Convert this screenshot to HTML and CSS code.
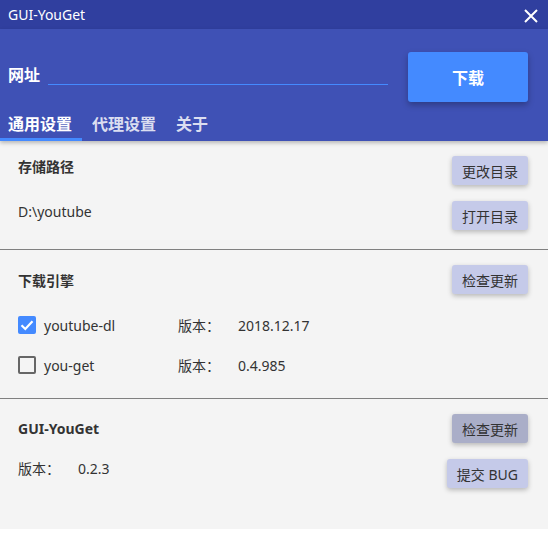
FILE: index.html
```html
<!DOCTYPE html>
<html lang="zh-CN">
<head>
<meta charset="utf-8">
<title>GUI-YouGet</title>
<link rel="stylesheet" href="styles.css">
</head>
<body>
<div class="app">
  <div class="titlebar">
    <span class="title">GUI-YouGet</span>
    <svg class="close" width="14" height="14" viewBox="0 0 14 14"><path d="M1 1 L13 13 M13 1 L1 13" stroke="#fff" stroke-width="2" fill="none"/></svg>
  </div>
  <div class="header">
    <div class="url-row">
      <span class="url-label">网址</span>
      <div class="url-input"></div>
      <div class="dl-btn">下载</div>
    </div>
    <div class="tabs">
      <div class="tab tab-active">通用设置</div>
      <div class="tab">代理设置</div>
      <div class="tab">关于</div>
    </div>
  </div>
  <div class="content">
    <div class="section">
      <div class="row">
        <span class="sec-title up">存储路径</span>
        <span class="btn">更改目录</span>
      </div>
      <div class="row">
        <span class="text up">D:\youtube</span>
        <span class="btn">打开目录</span>
      </div>
    </div>
    <div class="divider"></div>
    <div class="section sec2">
      <div class="row">
        <span class="sec-title">下载引擎</span>
        <span class="btn">检查更新</span>
      </div>
      <div class="check-row">
        <span class="cb cb-on"><svg width="18" height="18" viewBox="0 0 18 18"><path d="M3.5 9.2 L7.3 13 L14.5 5.2" stroke="#fff" stroke-width="2.2" fill="none"/></svg></span>
        <span class="engine">youtube-dl</span>
        <span class="ver-label">版本：</span>
        <span class="text">2018.12.17</span>
      </div>
      <div class="check-row">
        <span class="cb cb-off"></span>
        <span class="engine">you-get</span>
        <span class="ver-label">版本：</span>
        <span class="text">0.4.985</span>
      </div>
    </div>
    <div class="divider"></div>
    <div class="section sec3">
      <div class="row">
        <span class="sec-title">GUI-YouGet</span>
        <span class="btn btn-dark">检查更新</span>
      </div>
      <div class="row">
        <span class="ver-wrap up2"><span class="ver-label">版本：</span><span class="text">0.2.3</span></span>
        <span class="btn">提交 BUG</span>
      </div>
    </div>
  </div>
</div>
</body>
</html>
```
FILE: styles.css
```css
* { box-sizing: border-box; }
html, body { margin: 0; padding: 0; background: #ffffff; }
body {
  font-family: "Noto Sans", "Noto Sans CJK SC", sans-serif;
  width: 548px;
  height: 533px;
  overflow: hidden;
}
.app {
  width: 548px;
  height: 529px;
  display: flex;
  flex-direction: column;
  background: #f4f4f4;
}
.titlebar {
  height: 29px;
  background: #303f9f;
  display: flex;
  align-items: center;
  justify-content: space-between;
  padding: 0 10px 0 8px;
}
.title {
  color: #fff;
  font-size: 14px;
  line-height: 20px;
}
.close { margin-top: 3px; }
.header {
  background: #3f51b5;
  padding-top: 23px;
  box-shadow: 0 2px 4px rgba(0,0,0,0.25);
  position: relative;
  z-index: 1;
}
.url-row {
  height: 50px;
  display: flex;
  align-items: center;
  padding: 0 20px 0 8px;
}
.url-label {
  color: #fff;
  font-weight: bold;
  font-size: 16px;
  line-height: 20px;
  margin-top: -4px;
}
.url-input {
  width: 340px;
  height: 16px;
  margin-left: 8px;
  border-bottom: 1px solid #448aff;
}
.dl-btn {
  margin-left: 20px;
  width: 120px;
  height: 50px;
  background: #448aff;
  border-radius: 3px;
  color: #fff;
  font-weight: bold;
  font-size: 16px;
  display: flex;
  align-items: center;
  justify-content: center;
  box-shadow: 0 3px 6px rgba(0,0,0,0.28);
}
.tabs {
  display: flex;
  margin-top: 6px;
}
.tab {
  height: 33px;
  padding: 3px 10px 0 10px;
  line-height: 27px;
  font-size: 16px;
  font-weight: bold;
  color: rgba(255,255,255,0.82);
  border-bottom: 3px solid transparent;
}
.tab-active {
  padding-left: 8px;
  color: #fff;
  border-bottom-color: #448aff;
}
.content {
  flex: 1;
  display: flex;
  flex-direction: column;
}
.section {
  padding: 15px 20px 19px 18px;
  display: flex;
  flex-direction: column;
  gap: 16px;
}
.sec2 { padding-bottom: 13px; gap: 0; }
.sec3 { padding-bottom: 0; }
.row {
  height: 29px;
  display: flex;
  align-items: center;
  justify-content: space-between;
}
.up { margin-bottom: 9px; }
.up2 { margin-bottom: 11px; }
.sec-title {
  font-size: 14px;
  font-weight: bold;
  color: #333;
}
.text {
  font-size: 14px;
  color: #333;
}
.btn {
  height: 29px;
  padding: 0 10px;
  background: #c5cae9;
  border-radius: 3px;
  font-size: 14px;
  color: #333;
  display: flex;
  align-items: center;
  box-shadow: 0 2px 5px rgba(0,0,0,0.25);
}
.btn-dark { background: #aaaec8; }
.divider {
  height: 1px;
  background: #808080;
}
.check-row {
  height: 40px;
  display: flex;
  align-items: center;
}
.sec2 .row { margin-bottom: 11px; }
.cb {
  width: 18px;
  height: 18px;
  border-radius: 2px;
  flex: none;
  display: block;
}
.cb svg { display: block; }
.cb-on { background: #448aff; }
.cb-off { border: 2px solid #666; }
.engine {
  margin-left: 8px;
  width: 134px;
  font-size: 14px;
  color: #333;
}
.ver-label {
  display: inline-block;
  width: 60px;
  font-size: 14px;
  color: #333;
}
.ver-wrap { display: flex; align-items: center; }
```
